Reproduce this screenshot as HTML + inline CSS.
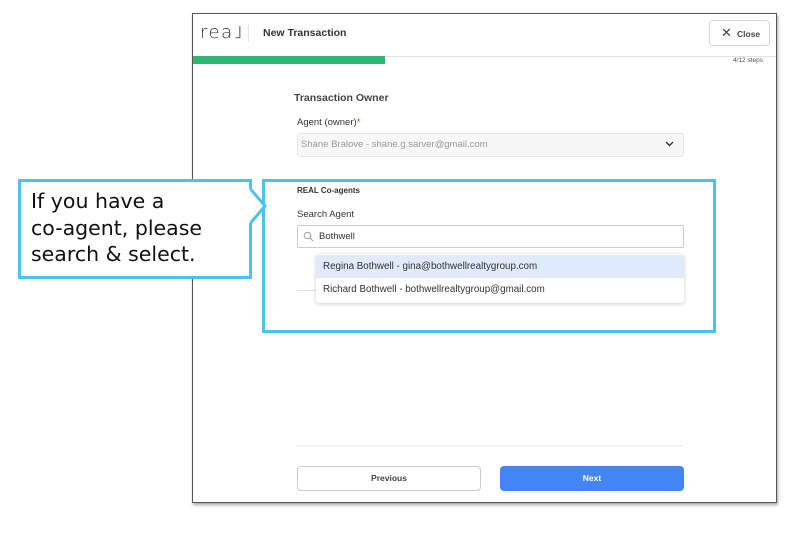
<!DOCTYPE html>
<html><head><meta charset="utf-8"><style>
*{box-sizing:border-box;margin:0;padding:0}
body{width:790px;height:533px;background:#fff;position:relative;font-family:"Liberation Sans",sans-serif;overflow:hidden}
.a{position:absolute}
.frame{left:192px;top:13px;width:585px;height:490px;border:1px solid #555;box-shadow:1px 2px 3px rgba(0,0,0,.35);background:#fff}
.t{font-size:10px;color:#333}
</style></head><body>
<div class="a frame"></div>
<div class="a" style="left:200px;top:22px;font-size:18px;color:#333;letter-spacing:1.5px;font-family:'DejaVu Sans',sans-serif;font-weight:300">rea˩</div>
<div class="a" style="left:248px;top:24px;width:1px;height:18px;background:#e5e5e5"></div>
<div class="a" style="left:263px;top:27px;font-size:10.5px;font-weight:bold;color:#333">New Transaction</div>
<div class="a" style="left:709px;top:20px;width:61px;height:26px;border:1px solid #d5d5d5;border-radius:4px"></div>
<div class="a" style="left:721px;top:25px;font-size:13px;color:#444">✕</div>
<div class="a" style="left:737px;top:29px;font-size:8.5px;font-weight:bold;color:#444">Close</div>
<div class="a" style="left:193px;top:56px;width:583px;height:1px;background:#e3e3e3"></div>
<div class="a" style="left:193px;top:56px;width:192px;height:8px;background:#2fb673"></div>
<div class="a" style="left:733px;top:57px;font-size:6.5px;color:#555">4/12 steps</div>
<div class="a" style="left:294px;top:92px;font-size:10.5px;font-weight:bold;color:#444">Transaction Owner</div>
<div class="a t" style="left:297px;top:117px;font-size:9.5px">Agent (owner)<span style="color:#e33">*</span></div>
<div class="a" style="left:297px;top:133px;width:387px;height:24px;border:1px solid #e6e6e6;border-radius:3px;background:#f7f7f7"></div>
<div class="a" style="left:301px;top:139px;font-size:9.5px;color:#999">Shane Bralove - shane.g.sarver@gmail.com</div>
<svg class="a" style="left:665px;top:141px" width="9" height="6" viewBox="0 0 9 6"><path d="M1 1l3.5 3.5L8 1" fill="none" stroke="#333" stroke-width="1.4"/></svg>
<div class="a t" style="left:297px;top:186px;font-size:8px;font-weight:bold">REAL Co-agents</div>
<div class="a t" style="left:297px;top:209px;font-size:9.5px">Search Agent</div>
<div class="a" style="left:297px;top:225px;width:387px;height:23px;border:1px solid #ccc;border-radius:2px"></div>
<svg class="a" style="left:303px;top:231px" width="11" height="11" viewBox="0 0 11 11"><circle cx="4.5" cy="4.5" r="3.3" fill="none" stroke="#999" stroke-width="1"/><path d="M7 7l3 3" stroke="#999" stroke-width="1"/></svg>
<div class="a t" style="left:319px;top:231px;font-size:9.5px">Bothwell</div>
<div class="a" style="left:297px;top:290px;width:20px;height:1px;background:#ddd"></div>
<div class="a" style="left:316px;top:254px;width:368px;height:49px;background:#fff;border-radius:3px;box-shadow:0 1px 4px rgba(0,0,0,.2)"></div>
<div class="a" style="left:316px;top:255px;width:368px;height:23px;background:#dfeafb"></div>
<div class="a t" style="left:323px;top:261px;font-size:9.8px">Regina Bothwell - gina@bothwellrealtygroup.com</div>
<div class="a t" style="left:323px;top:284px;font-size:9.8px">Richard Bothwell - bothwellrealtygroup@gmail.com</div>
<div class="a" style="left:297px;top:445px;width:387px;height:2px;background:#f3f3f3"></div>
<div class="a" style="left:297px;top:466px;width:184px;height:25px;border:1px solid #ccc;border-radius:4px;font-size:8.5px;font-weight:bold;color:#444;text-align:center;line-height:23px">Previous</div>
<div class="a" style="left:500px;top:466px;width:184px;height:25px;background:#4285f4;border-radius:4px;font-size:8.5px;font-weight:bold;color:#fff;text-align:center;line-height:25px">Next</div>
<div class="a" style="left:262px;top:179px;width:454px;height:154px;border:3px solid #48c4ee"></div>
<div class="a" style="left:18px;top:179px;width:234px;height:100px;border:3px solid #48c4ee;background:#fff"></div>
<svg class="a" style="left:248px;top:189px" width="20" height="36" viewBox="0 0 20 36"><path d="M0 0 L3 0 L17 17 L3 34 L0 34 Z" fill="#fff"/><path d="M2.5 0 L17 17 L2.5 34" fill="none" stroke="#48c4ee" stroke-width="3"/></svg>
<div class="a" style="left:31px;top:188px;font-family:'DejaVu Sans',sans-serif;font-size:20.5px;line-height:26.5px;color:#111">If you have a<br>co-agent, please<br>search &amp; select.</div>
</body></html>
